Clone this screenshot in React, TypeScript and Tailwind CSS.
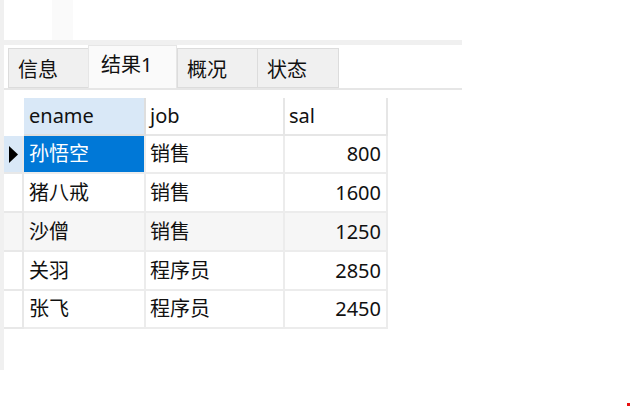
import React from "react"

const ROWS = [
  { ename: "孙悟空", job: "销售", sal: "800", h: "h-[38px]" },
  { ename: "猪八戒", job: "销售", sal: "1600", h: "h-[39px]" },
  { ename: "沙僧", job: "销售", sal: "1250", h: "h-[39px]" },
  { ename: "关羽", job: "程序员", sal: "2850", h: "h-[39px]" },
  { ename: "张飞", job: "程序员", sal: "2450", h: "h-[38px]" },
]

const TABS = ["信息", "结果1", "概况", "状态"]

const font = { fontFamily: '"Noto Sans", "Noto Sans CJK SC", sans-serif' }

export default function App() {
  return (
    <div className="relative flex w-[631px] h-[407px] bg-white text-[#111] overflow-hidden" style={font}>
      {/* left gutter */}
      <div className="w-[4px] h-[370px] bg-[#f0f0f0] shrink-0" />

      <div className="flex flex-col w-[458px]">
        {/* top blank area */}
        <div className="h-[40px] flex">
          <div className="ml-[48px] w-[21px] h-full bg-[#fafafa]" />
        </div>
        <div className="h-[5px] bg-[#f0f0f0]" />

        {/* tabs */}
        <div className="h-[43px] flex items-end pl-[4px]">
          {TABS.map((t, i) => {
            const active = i === 1
            const w = ["w-[81px]", "w-[89px]", "w-[81px]", "w-[82px]"][i]
            return active ? (
              <div
                key={t}
                className={`${w} h-[43px] flex items-start pt-[5px] pl-[12px] bg-[#fafafa] border border-b-0 border-[#e6e6e6] text-[20px] leading-[27px]`}
              >
                {t}
              </div>
            ) : (
              <div
                key={t}
                className={`${w} h-[40px] flex items-start pt-[7px] pl-[9px] bg-[#f0f0f0] border border-[#dcdcdc] -mr-px text-[20px] leading-[27px]`}
              >
                {t}
              </div>
            )
          })}
        </div>
        <div className="h-[2px] bg-[#e6e6e6]" />

        {/* grid */}
        <div className="mt-[8px] flex flex-col w-[384px]">
          <div className="flex h-[38px]">
            <div className="w-[20px] shrink-0" />
            <div className="w-[122px] flex items-center pl-[5px] bg-[#d9e8f7] border-r-2 border-b-2 border-[#dedede] text-[20px]">
              ename
            </div>
            <div className="w-[139px] flex items-center pl-[4px] border-r-2 border-b-2 border-[#e6e6e6] text-[20px]">
              job
            </div>
            <div className="w-[103px] flex items-center pl-[4px] border-r-2 border-b-2 border-[#e6e6e6] text-[20px]">
              sal
            </div>
          </div>
          {ROWS.map((r, i) => {
            const sel = i === 0
            const bg = i === 2 ? "bg-[#f6f6f6]" : "bg-white"
            return (
              <div key={r.ename} className={`flex ${r.h}`}>
                <div
                  className={`w-[20px] shrink-0 flex items-center pl-[5px] border-r-2 border-b-2 border-[#e8e8e8] ${sel ? "bg-[#d9e8f7]" : bg}`}
                >
                  {sel && (
                    <svg width="9" height="17" viewBox="0 0 9 17">
                      <polygon points="0,0 9,8.5 0,17" fill="#000" />
                    </svg>
                  )}
                </div>
                <div
                  className={`w-[122px] flex items-center pl-[5px] border-r-2 border-b-2 border-[#ececec] text-[20px] ${sel ? "bg-[#0078d7] text-white" : bg}`}
                >
                  {r.ename}
                </div>
                <div className={`w-[139px] flex items-center pl-[4px] border-r-2 border-b-2 border-[#ececec] text-[20px] ${bg}`}>
                  {r.job}
                </div>
                <div className={`w-[103px] flex items-center justify-end pr-[5px] border-r-2 border-b-2 border-[#ececec] text-[20px] ${bg}`}>
                  {r.sal}
                </div>
              </div>
            )
          })}
        </div>
      </div>

      <div className="absolute left-[627px] top-[403px] w-[3px] h-[3px] bg-[#e81010]" />
    </div>
  )
}
